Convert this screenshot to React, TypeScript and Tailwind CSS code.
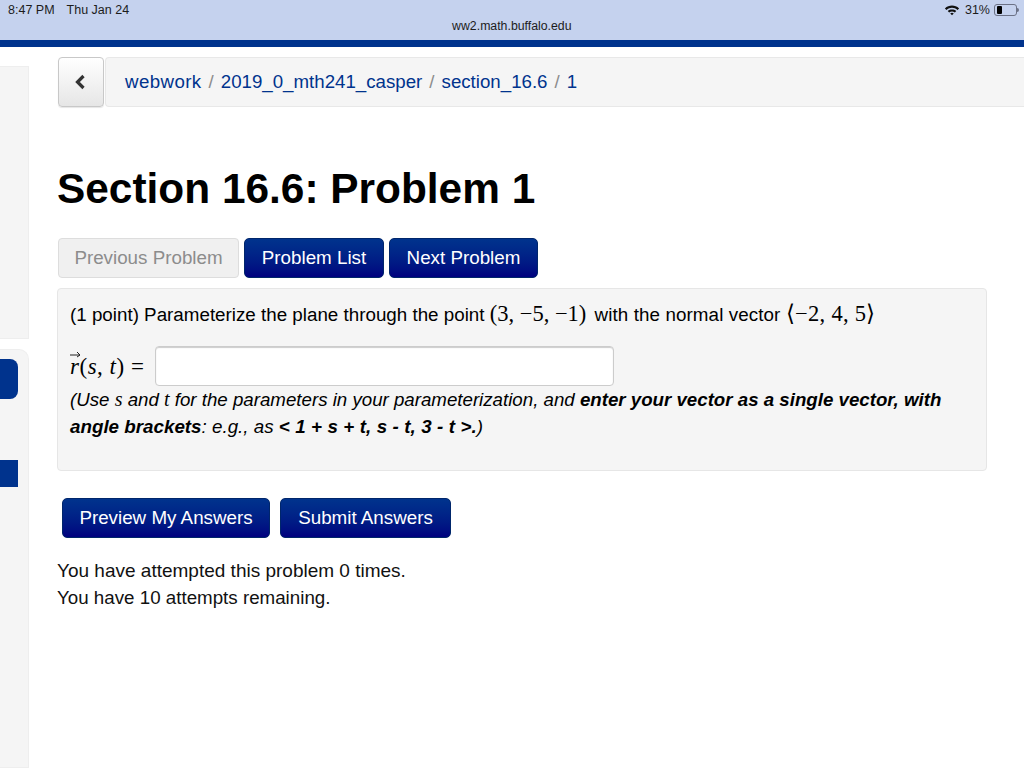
import { ReactNode } from "react";

const sans = "font-['Liberation_Sans',Arial,sans-serif]";
const serif = "font-['Liberation_Serif','Times_New_Roman',serif]";

function NavyButton({ children, className }: { children: ReactNode; className: string }) {
  return (
    <button
      className={`h-[40px] rounded-[5px] border border-[#00266b] bg-gradient-to-b from-[#00338d] to-[#00007f] pt-px text-[18.8px] text-white ${className}`}
    >
      {children}
    </button>
  );
}

function Math({ children, className = "text-[22.5px]" }: { children: ReactNode; className?: string }) {
  return <span className={`${serif} ${className}`}>{children}</span>;
}

function StatusBar() {
  return (
    <div className="flex h-10 bg-[#c5d2ee] pl-[8px] pr-[5px] pt-[2px] text-[12.5px] leading-[16px] text-[#1c1c1c]">
      <span>8:47 PM</span>
      <span className="ml-[12px]">Thu Jan 24</span>
      <span className="flex-1 pl-[323px] pt-[16px] text-[12.3px]">ww2.math.buffalo.edu</span>
      <svg width="16" height="12" viewBox="0 0 18 12" className="mr-[5px] mt-[2px]">
        <path d="M1 4.2 C5.5 0 12.5 0 17 4.2 L15.2 6 C11.5 2.8 6.5 2.8 2.8 6 Z" fill="#111" />
        <path d="M4.2 7.2 C7 5 11 5 13.8 7.2 L12.2 8.8 C10.2 7.4 7.8 7.4 5.8 8.8 Z" fill="#111" />
        <path d="M7 9.8 C8.2 9 9.8 9 11 9.8 L9 11.8 Z" fill="#111" />
      </svg>
      <span>31%</span>
      <div className="ml-[4px] mt-[2px] flex h-[12px] w-[23px] rounded-[3px] border border-[#6b7185] p-[1px]">
        <div className="ml-px w-[5px] rounded-[1px] bg-black" />
      </div>
      <div className="mt-[6px] h-[4px] w-[2px] rounded-r-sm bg-[#6b7185]" />
    </div>
  );
}

function Sidebar() {
  return (
    <div className="flex w-[29px] shrink-0 flex-col pt-[19px]">
      <div className="h-[273px] border-y border-r border-[#eeeeee] bg-[#f5f5f5]" />
      <div className="mt-[10px] flex-1 rounded-tr-[10px] border-y border-r border-[#eeeeee] bg-[#f5f5f5] pt-[9px]">
        <div className="h-10 w-[18px] rounded-r-[8px] bg-[#00338d]" />
        <div className="mt-[61px] h-[27px] w-[18px] bg-[#00338d]" />
      </div>
    </div>
  );
}

function Breadcrumb() {
  return (
    <div className="flex h-[51px] pt-px">
      <button className="ml-px flex w-[46px] items-center justify-center rounded-[4px] border border-[#c8c8c8] bg-gradient-to-b from-white to-[#e6e6e6] shadow-[0_1px_1px_rgba(0,0,0,0.1)]">
        <svg width="14" height="16" viewBox="0 0 14 16" className="-ml-[2px]">
          <path d="M10.5 2 L4.5 8 L10.5 14" fill="none" stroke="#333" strokeWidth="3.2" />
        </svg>
      </button>
      <div className="ml-px flex flex-1 items-center gap-[7px] rounded-l-[4px] border-y border-l border-[#e8e8e8] bg-[#f5f5f5] pl-[19px] text-[18.7px] text-[#00338d]">
        <span className="tracking-[0.4px]">webwork</span>
        <span className="text-[#8c8c8c]">/</span>
        <span>2019_0_mth241_casper</span>
        <span className="text-[#8c8c8c]">/</span>
        <span>section_16.6</span>
        <span className="text-[#8c8c8c]">/</span>
        <span>1</span>
      </div>
    </div>
  );
}

function ProblemBox() {
  return (
    <div className="mt-[10px] h-[183px] w-[930px] rounded-[4px] border border-[#e6e6e6] bg-[#f5f5f5] px-[12px] pt-[11px] text-[18.8px] leading-[27px] text-black">
      <div className="whitespace-nowrap">
        (1 point) Parameterize the plane through the point{" "}
        <Math className="mr-[3px] text-[22.5px]">(3, −5, −1)</Math>{" "}
        <span className="tracking-[0.1px]">with the normal vector</span>{" "}
        <Math className="text-[22.5px] tracking-[0.3px]">⟨−2, 4, 5⟩</Math>
      </div>
      <div className="mt-[18px] flex items-center">
        <Math className="relative w-[85px] text-[23px] tracking-[0.5px]">
          <svg width="11" height="7" viewBox="0 0 11 7" className="absolute -top-[2px] left-0">
            <path d="M0 4 H10 M7 1 L10 4 L7 6" fill="none" stroke="#222" strokeWidth="1" />
          </svg>
          <i>r</i>(<i>s</i>, <i>t</i>) =
        </Math>
        <div className="h-[40px] w-[459px] rounded-[4px] border border-[#cccccc] bg-white shadow-[inset_0_1px_1px_rgba(0,0,0,0.2)]" />
      </div>
      <div className="whitespace-nowrap text-[18.7px] italic">
        (Use <Math className="text-[20px]">s</Math> and <Math className="text-[20px]">t</Math> for the parameters in
        your parameterization, and <b>enter your vector as a single vector, with</b>
      </div>
      <div className="whitespace-nowrap italic">
        <b>angle brackets</b>: e.g., as <b className="tracking-[0.1px]">&lt; 1 + s + t, s - t, 3 - t &gt;.</b>)
      </div>
    </div>
  );
}

export default function App() {
  return (
    <div className={`flex min-h-[768px] flex-col bg-white ${sans}`}>
      <StatusBar />
      <div className="h-[7px] bg-[#00338d]" />
      <div className="flex flex-1">
        <Sidebar />
        <main className="ml-[28px] min-w-0 flex-1 pt-[9px]">
          <Breadcrumb />
          <h1 className="mt-[57px] text-[42.4px] font-bold leading-[50px] text-black">Section 16.6: Problem 1</h1>
          <div className="mt-[24px] flex gap-[5px] pl-px">
            <button className="h-[40px] w-[181px] rounded-[4px] border border-[#dddddd] bg-[#f0f0f0] pt-px text-[18.8px] text-[#8c8c8c]">
              Previous Problem
            </button>
            <NavyButton className="w-[140px]">Problem List</NavyButton>
            <NavyButton className="w-[149px]">Next Problem</NavyButton>
          </div>
          <ProblemBox />
          <div className="mt-[27px] flex gap-[10px] pl-[5px]">
            <NavyButton className="w-[208px]">Preview My Answers</NavyButton>
            <NavyButton className="w-[171px]">Submit Answers</NavyButton>
          </div>
          <div className="mt-[19px] text-[19px] leading-[27px] text-[#111111]">
            <p>You have attempted this problem 0 times.</p>
            <p className="text-[18.75px]">You have 10 attempts remaining.</p>
          </div>
        </main>
      </div>
    </div>
  );
}
